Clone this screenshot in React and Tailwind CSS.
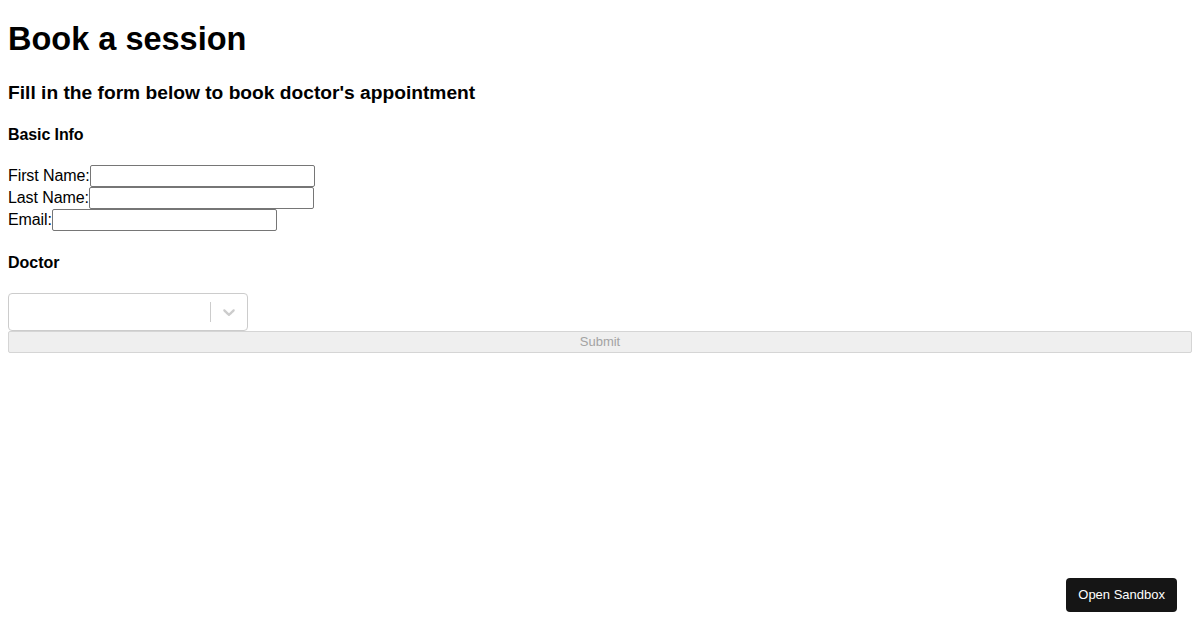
import React from 'react';

const ChevronDown = () => (
  <svg height="20" width="20" viewBox="0 0 20 20" aria-hidden="true" className="fill-current">
    <path d="M4.516 7.548c0.436-0.446 1.043-0.481 1.576 0l3.908 3.747 3.908-3.747c0.533-0.481 1.141-0.446 1.574 0 0.436 0.445 0.408 1.197 0 1.615-0.406 0.418-4.695 4.502-4.695 4.502-0.217 0.223-0.502 0.335-0.787 0.335s-0.57-0.112-0.789-0.335c0 0-4.287-4.084-4.695-4.502s-0.436-1.17 0-1.615z" />
  </svg>
);

const Field = ({ label, id }) => (
  <div className="flex items-center h-[22px]">
    <label htmlFor={id} className="text-[16px] leading-[22px] tracking-[-0.1px]">{label}</label>
    <input
      id={id}
      type="text"
      className="w-[225px] h-[22px] border border-[#767676] rounded-[2px] bg-white px-[2px] text-[13px] outline-none"
    />
  </div>
);

export default function App() {
  return (
    <div className="min-h-[630px] bg-white text-black p-2 font-['Liberation_Sans',Arial,sans-serif]">
      <h1 className="text-[32.5px] font-bold leading-[37px] mt-[13px]">Book a session</h1>
      <h3 className="text-[19.2px] font-bold leading-[23px] mt-[23px]">Fill in the form below to book doctor's appointment</h3>

      <form onSubmit={(e) => e.preventDefault()}>
        <h4 className="text-[16px] font-bold leading-[18px] mt-[22px] tracking-[-0.1px]">Basic Info</h4>
        <div className="mt-[21px]">
          <Field label="First Name:" id="first" />
          <Field label="Last Name:" id="last" />
          <Field label="Email:" id="email" />
        </div>

        <h4 className="text-[16px] font-bold leading-[18px] mt-[23px]">Doctor</h4>

        <div className="mt-[21px] w-[240px] h-[38px] flex items-center border border-[#cccccc] rounded-[4px] bg-white">
          <div className="flex-1" />
          <span className="w-px h-[20px] bg-[#cccccc]" />
          <div className="px-2 text-[#cccccc] flex items-center">
            <ChevronDown />
          </div>
        </div>

        <button
          type="submit"
          disabled
          className="block w-full h-[22px] bg-[#efefef] border border-[#d5d5d5] rounded-[2px] text-[13px] text-[#a3a3a3] font-['Liberation_Sans',Arial,sans-serif]"
        >
          Submit
        </button>
      </form>

      <button className="fixed right-[23px] bottom-[18px] h-[34px] px-[12px] bg-[#151515] text-white text-[13px] rounded-[4px] font-['Liberation_Sans',Arial,sans-serif]">
        Open Sandbox
      </button>
    </div>
  );
}
